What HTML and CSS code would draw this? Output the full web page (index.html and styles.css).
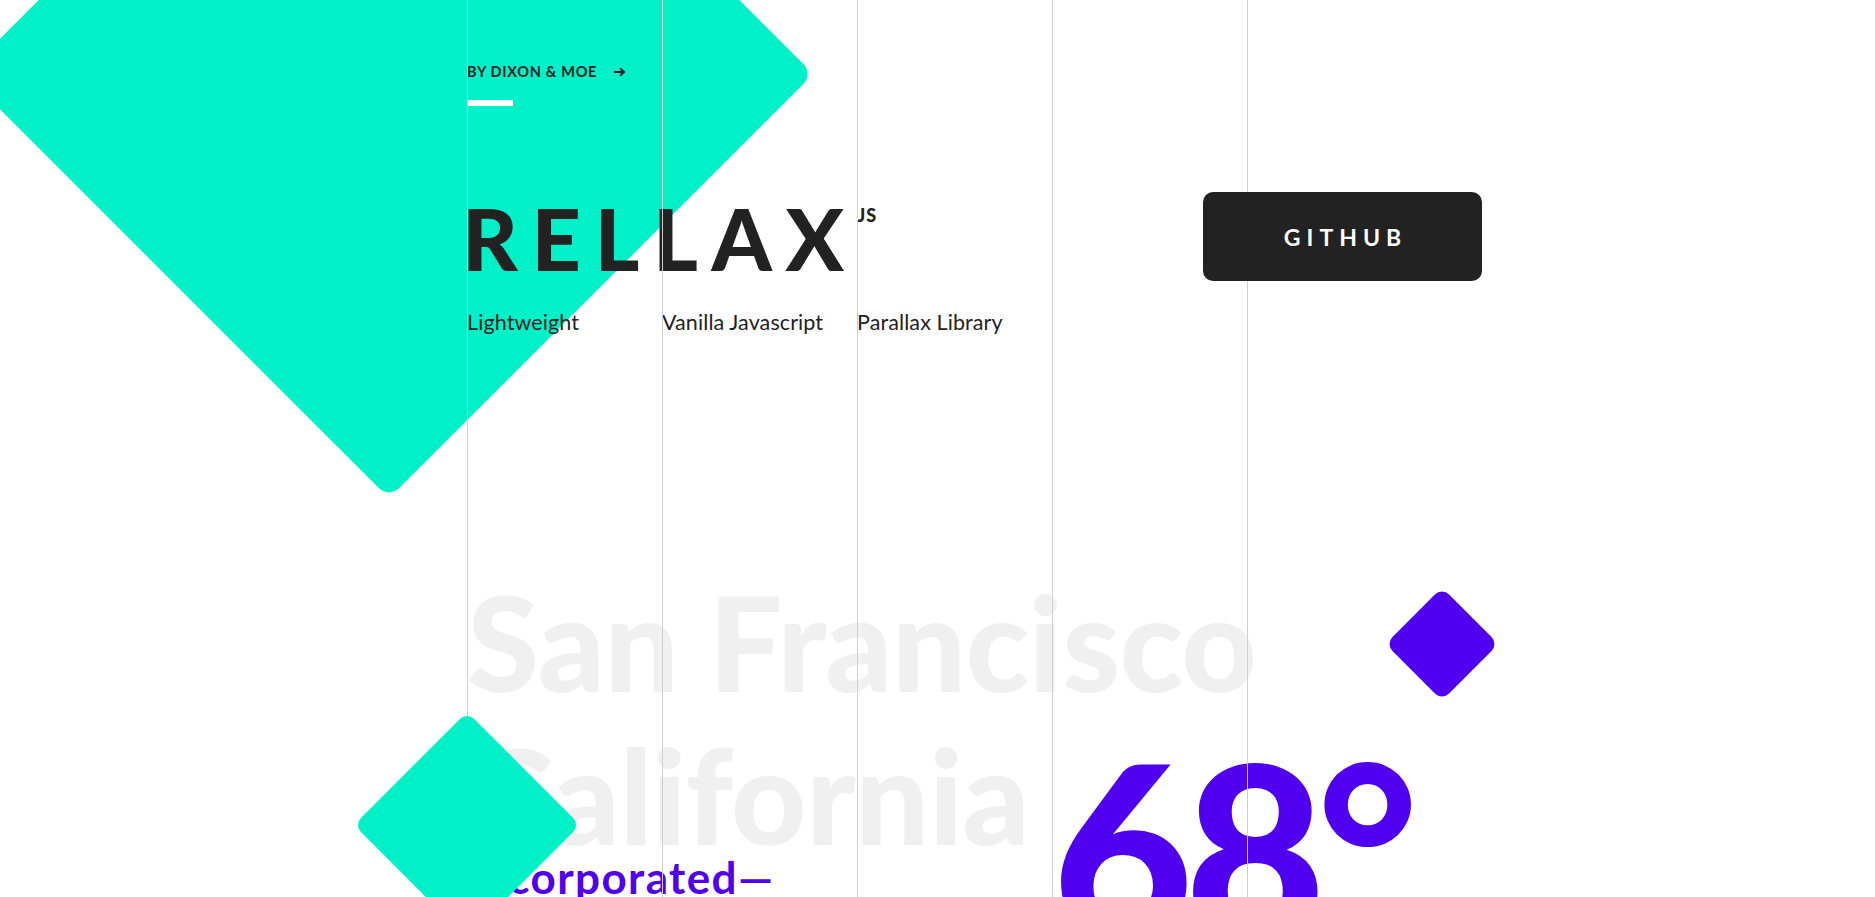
FILE: index.html
```html
<!DOCTYPE html>
<html lang="en">
<head>
<meta charset="utf-8">
<title>Rellax</title>
<link rel="stylesheet" href="styles.css">
</head>
<body>
<div class="page">
  <div class="shape shape-big"></div>
  <div class="shape shape-small"></div>
  <div class="shape shape-purple"></div>
  <div class="grid-lines"><span></span><span></span><span></span><span></span><span></span></div>
  <header class="hero">
    <div class="brand">
      <a class="byline" href="#">BY DIXON &amp; MOE <svg class="arrow" width="13" height="10" viewBox="0 0 13 10"><path d="M1 5H11M7 1.2L11 5L7 8.8" fill="none" stroke="#222" stroke-width="2"/></svg></a>
      <div class="bar"></div>
      <h1 class="title"><span class="title-main">RELLAX</span><span class="title-sup">JS</span></h1>
      <ul class="taglines">
        <li>Lightweight</li>
        <li>Vanilla Javascript</li>
        <li>Parallax Library</li>
      </ul>
    </div>
    <a class="github" href="#">GITHUB</a>
  </header>
  <section class="city">
    <div class="city-names">
      <p class="city-big">San Francisco<br>California</p>
      <p class="incorporated">Incorporated—</p>
    </div>
    <div class="temp">68°</div>
  </section>
</div>
</body>
</html>
```
FILE: styles.css
```css
html, body {
  margin: 0;
  padding: 0;
  background: #fff;
}
body {
  font-family: Lato, "Liberation Sans", sans-serif;
  color: #222;
}
.page {
  position: relative;
  z-index: 0;
  height: 897px;
  overflow: hidden;
}
.shape {
  position: absolute;
  transform: rotate(45deg);
}
.shape-big {
  left: 89px;
  top: -226px;
  width: 600px;
  height: 600px;
  border-radius: 14px;
  background: #00f0c8;
  z-index: -1;
}
.shape-small {
  left: 386.5px;
  top: 744.5px;
  width: 160px;
  height: 160px;
  border-radius: 10px;
  background: #00f0c8;
  z-index: 2;
}
.shape-purple {
  left: 1402px;
  top: 603.5px;
  width: 80px;
  height: 80px;
  border-radius: 10px;
  background: #5000ee;
  z-index: 2;
}
.grid-lines {
  position: absolute;
  top: 0;
  bottom: 0;
  left: 467px;
  display: flex;
  z-index: 1;
  pointer-events: none;
}
.grid-lines span {
  box-sizing: border-box;
  width: 195px;
  border-left: 1px solid #d0d0d0;
}
.hero {
  display: flex;
  align-items: flex-start;
  padding-left: 467px;
}
.brand {
  width: 585px;
  flex: none;
  padding-top: 64px;
}
.byline {
  display: block;
  height: 15px;
  font-size: 14.5px;
  line-height: 15px;
  font-weight: 700;
  letter-spacing: 0.7px;
  color: #222;
  text-decoration: none;
  white-space: nowrap;
}
.arrow {
  vertical-align: 0;
  margin-left: 12px;
}
.bar {
  width: 46px;
  height: 6px;
  margin-top: 21px;
  background: #fff;
}
.title {
  display: flex;
  align-items: flex-start;
  margin: 89.3px 0 0 -5px;
  font-weight: 900;
}
.title-main {
  font-size: 86px;
  line-height: 86px;
  letter-spacing: 13.6px;
}
.title-sup {
  font-size: 18px;
  line-height: 18px;
  margin: 10.7px 0 0 0;
  letter-spacing: 1px;
}
.taglines {
  display: flex;
  list-style: none;
  margin: 28.3px 0 0;
  padding: 0;
}
.taglines li {
  width: 195px;
  font-size: 21.5px;
  line-height: 24px;
  letter-spacing: 0.1px;
}
.github {
  position: relative;
  z-index: 2;
  box-sizing: border-box;
  display: flex;
  align-items: center;
  justify-content: center;
  width: 279px;
  height: 89px;
  margin: 192px 0 0 151px;
  padding-left: 6px;
  border-radius: 10px;
  background: #222;
  color: #fff;
  font-size: 23px;
  font-weight: 700;
  letter-spacing: 6px;
  text-decoration: none;
}
.city {
  display: flex;
  align-items: flex-start;
  margin-top: 231px;
  padding-left: 467px;
}
.city-names {
  width: 585px;
  flex: none;
}
.city-big {
  margin: 0;
  font-size: 131px;
  line-height: 153px;
  font-weight: 900;
  color: #f0f0f0;
  letter-spacing: -0.5px;
  white-space: nowrap;
}
.incorporated {
  margin: -16px 0 0 1px;
  font-size: 44px;
  line-height: 44px;
  font-weight: 700;
  letter-spacing: 1.4px;
  color: #5000ee;
  white-space: nowrap;
}
.temp {
  margin-top: 161.5px;
  font-size: 244px;
  line-height: 244px;
  font-weight: 900;
  letter-spacing: -9px;
  color: #5000ee;
  white-space: nowrap;
}
```
